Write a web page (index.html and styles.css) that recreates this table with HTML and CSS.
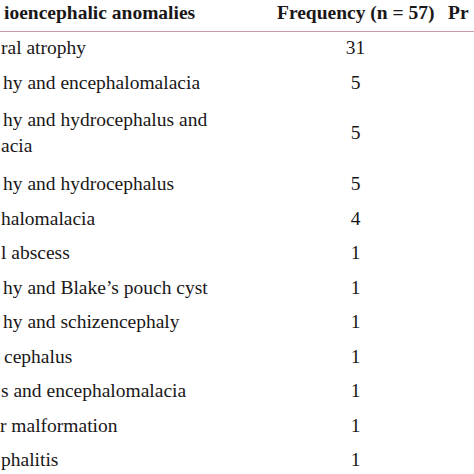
FILE: index.html
```html
<!DOCTYPE html>
<html lang="en">
<head>
<meta charset="utf-8">
<title>Cranioencephalic anomalies</title>
<link rel="stylesheet" href="styles.css">
</head>
<body>
<div class="frame">
<table class="data">
  <colgroup>
    <col class="c-name">
    <col class="c-freq">
    <col class="c-prev">
  </colgroup>
  <thead>
    <tr>
      <th class="name"><span class="in-4">ioencephalic anomalies</span></th>
      <th class="num">Frequency (n = 57)</th>
      <th class="prev">Pr</th>
    </tr>
  </thead>
  <tbody>
    <tr><td class="name"><span class="in-1">ral atrophy</span></td><td class="num">31</td><td class="prev"></td></tr>
    <tr><td class="name"><span class="in-3">hy and encephalomalacia</span></td><td class="num">5</td><td class="prev"></td></tr>
    <tr class="two"><td class="name"><span class="in-3">hy and hydrocephalus and</span><br><span class="in-1">acia</span></td><td class="num">5</td><td class="prev"></td></tr>
    <tr><td class="name"><span class="in-3">hy and hydrocephalus</span></td><td class="num">5</td><td class="prev"></td></tr>
    <tr><td class="name"><span class="in-1">halomalacia</span></td><td class="num">4</td><td class="prev"></td></tr>
    <tr><td class="name"><span class="in-1">l abscess</span></td><td class="num">1</td><td class="prev"></td></tr>
    <tr><td class="name"><span class="in-3">hy and Blake’s pouch cyst</span></td><td class="num">1</td><td class="prev"></td></tr>
    <tr><td class="name"><span class="in-3">hy and schizencephaly</span></td><td class="num">1</td><td class="prev"></td></tr>
    <tr><td class="name"><span class="in-4">cephalus</span></td><td class="num">1</td><td class="prev"></td></tr>
    <tr><td class="name"><span class="in-1">s and encephalomalacia</span></td><td class="num">1</td><td class="prev"></td></tr>
    <tr><td class="name"><span class="in-0">r malformation</span></td><td class="num">1</td><td class="prev"></td></tr>
    <tr><td class="name"><span class="in-1">phalitis</span></td><td class="num">1</td><td class="prev"></td></tr>
  </tbody>
</table>
</div>
</body>
</html>
```
FILE: styles.css
```css
html, body {
  margin: 0;
  padding: 0;
  background: #ffffff;
  overflow: hidden;
}

.frame {
  width: 474px;
  height: 474px;
  overflow: hidden;
}

.data {
  border-collapse: collapse;
  table-layout: fixed;
  width: 474px;
  color: #1a1718;
}

.data th,
.data td {
  font-family: "Liberation Serif", "Times New Roman", serif;
  font-size: 19.5px;
}

.c-name { width: 270px; }
.c-freq { width: 171px; }
.c-prev { width: 33px; }

.data th {
  font-weight: bold;
  line-height: 26px;
  padding: 0 7px 5px;
  border-bottom: 1px solid #c79ea6;
  white-space: nowrap;
  text-align: left;
}

.data td {
  line-height: 26px;
  padding: 3.2px 7px 5.3px;
  vertical-align: middle;
  white-space: nowrap;
}

.data .name {
  padding-left: 0;
  text-align: left;
}

.data .num {
  text-align: center;
}

.data .prev {
  padding-left: 7px;
  padding-right: 0;
  overflow: hidden;
}

.data .two td {
  padding-top: 6.5px;
  padding-bottom: 8.5px;
}

.in-0 { margin-left: 0; }
.in-1 { margin-left: 1px; }
.in-3 { margin-left: 3px; }
.in-4 { margin-left: 4px; }
```
